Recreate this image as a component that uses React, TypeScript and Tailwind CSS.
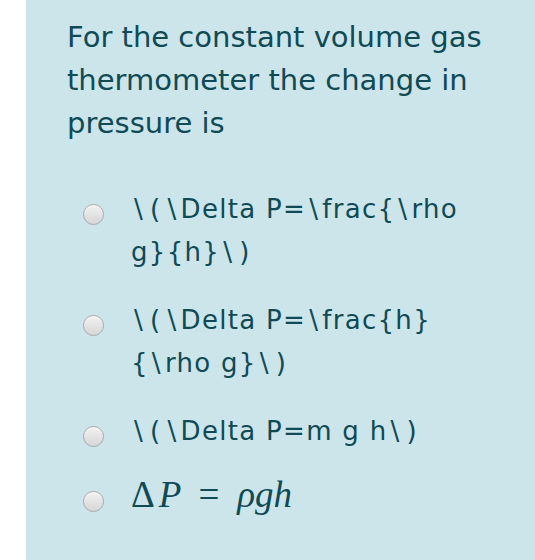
import React from 'react';

const options = [
  '\\(\\Delta P=\\frac{\\rho g}{h}\\)',
  '\\(\\Delta P=\\frac{h}{\\rho g}\\)',
  '\\(\\Delta P=m g h\\)',
];

// backslashes and parens are set wider in the original face
function RawTex({ text }: { text: string }) {
  return (
    <>
      {text.split('').map((ch, i) =>
        ch === '\\' || ch === '(' || ch === ')' ? (
          <span key={i} className="px-[3px]">
            {ch}
          </span>
        ) : (
          ch
        )
      )}
    </>
  );
}

function Radio() {
  return (
    <input
      type="radio"
      name="answer"
      className="appearance-none shrink-0 w-[21px] h-[21px] rounded-full border border-[#a8a8a8] bg-gradient-to-b from-[#f2f2f2] to-[#d6d6d6] shadow-[inset_0_1px_0_#ffffff]"
    />
  );
}

export default function App() {
  return (
    <div className="w-[535px] h-[560px] bg-white overflow-hidden">
      <div className="ml-[26px] h-full bg-[#cce5ea] pl-[41px] pr-[25px] pt-[16px] text-[#0f4a55] font-['DejaVu_Sans',sans-serif]">
        {/* question */}
        <p className="text-[29px] leading-[43px]">
          For the constant volume gas thermometer the change in pressure is
        </p>

        {/* choices */}
        <ul className="mt-[43px] pl-4 pr-[29px] space-y-[25px]">
          {options.map((opt, i) => (
            <li key={i} className="flex items-start gap-[27px]">
              <div className="mt-[16px]">
                <Radio />
              </div>
              <span className="flex-1 text-[26px] leading-[43px] tracking-[1.3px]">
                <RawTex text={opt} />
              </span>
            </li>
          ))}
          <li className="flex items-start gap-[27px]">
            <div className="mt-[12px]">
              <Radio />
            </div>
            <span className="flex-1 text-[37px] leading-[32px] font-['Liberation_Serif',serif]">
              <span>Δ</span>
              <span className="italic ml-[4px]">P</span>
              <span className="ml-[17px]">=</span>
              <span className="italic ml-[18px]">ρgh</span>
            </span>
          </li>
        </ul>
      </div>
    </div>
  );
}
